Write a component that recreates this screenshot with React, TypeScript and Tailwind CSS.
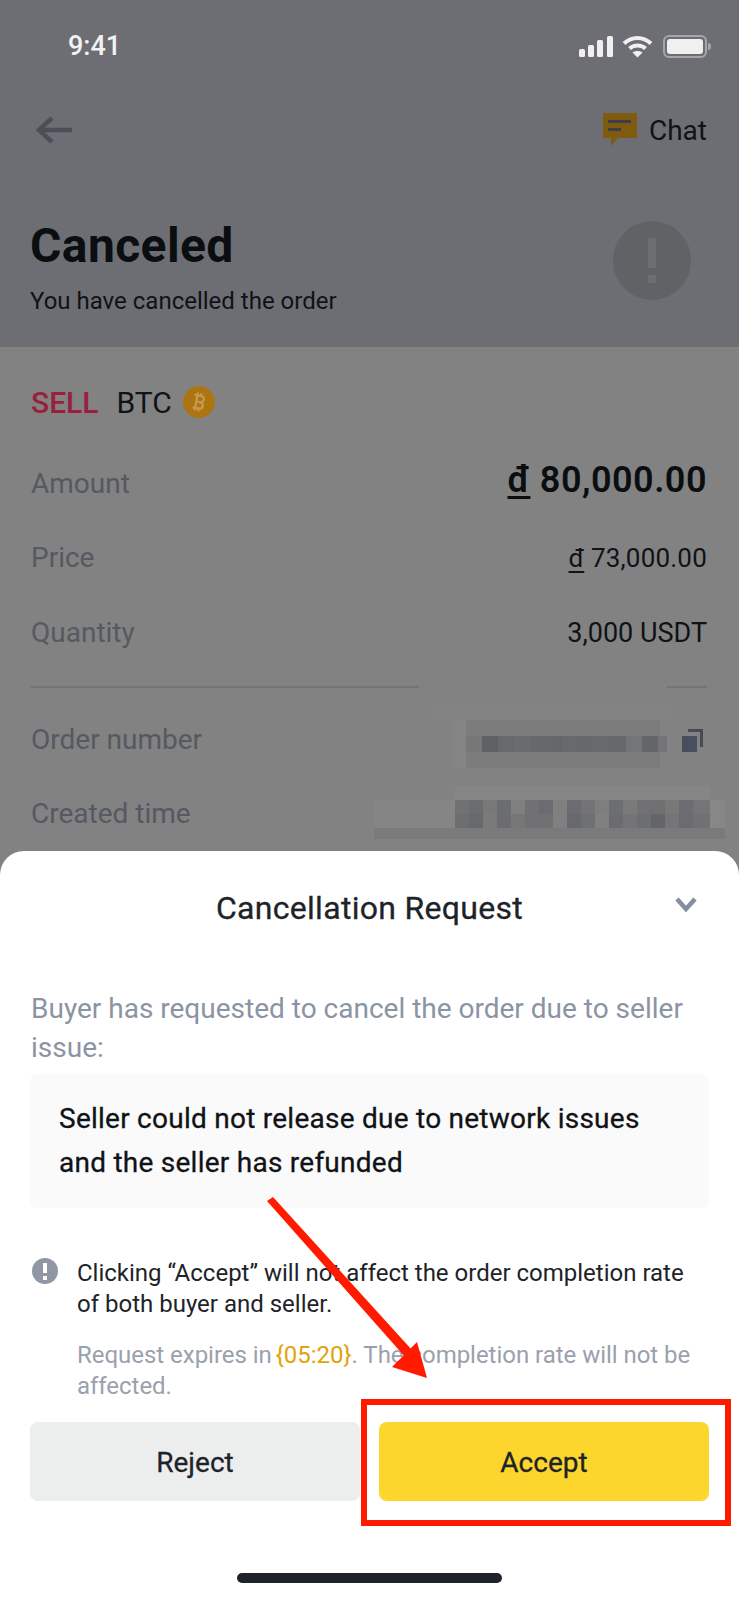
import React from "react";
import { Bitcoin } from "lucide-react";

const orderCells = [
  "bg-[#777778]", "bg-[#5f6064]", "bg-[#68696c]", "bg-[#6a6b6e]", "bg-[#67686b]", "bg-[#66676a]",
  "bg-[#68696c]", "bg-[#67686b]", "bg-[#68696c]", "bg-[#67686b]", "bg-[#747577]", "bg-[#646568]",
];
const timeTop = [
  "bg-[#717173]", "bg-[#6b6c6f]", "bg-[#787878]", "bg-[#6c6d70]", "bg-[#808080]", "bg-[#717173]",
  "bg-[#6b6c6f]", "bg-[#808080]", "bg-[#6b6c6f]", "bg-[#747476]", "bg-[#7e7e7e]", "bg-[#6d6e71]",
  "bg-[#7a7a7a]", "bg-[#717173]", "bg-[#707073]", "bg-[#787878]", "bg-[#6c6d70]", "bg-[#757577]",
];
const timeBottom = [
  "bg-[#6d6e70]", "bg-[#68696c]", "bg-[#7a7a7a]", "bg-[#6c6d70]", "bg-[#777778]", "bg-[#717173]",
  "bg-[#717173]", "bg-[#808080]", "bg-[#68696c]", "bg-[#6f7072]", "bg-[#808080]", "bg-[#6b6c6f]",
  "bg-[#747476]", "bg-[#6d6e71]", "bg-[#646568]", "bg-[#757577]", "bg-[#6b6c6f]", "bg-[#717173]",
];

function Row(props: { label: string; value?: React.ReactNode; className: string }) {
  return (
    <div className={"flex items-center justify-between " + props.className}>
      <span className="text-[28px] text-[#555961]">{props.label}</span>
      {props.value}
    </div>
  );
}

export default function App() {
  return (
    <div className="relative w-[739px] h-[1600px] overflow-hidden flex flex-col bg-white font-['Roboto',sans-serif] text-[#1e2329]">
      {/* dimmed top */}
      <div className="h-[347px] shrink-0 bg-[#6d6e73] flex flex-col">
        <div className="flex items-center justify-between h-[46px] mt-[23px] pl-[68px] pr-[28px]">
          <span className="text-[27px] font-medium text-[#f2f2f2]">9:41</span>
          <div className="flex items-center">
            <svg width="35" height="22" viewBox="0 0 35 22" fill="#f0f0f0">
              <rect x="0" y="14" width="6" height="8" rx="1.5" />
              <rect x="9" y="10" width="6" height="12" rx="1.5" />
              <rect x="18" y="5" width="6" height="17" rx="1.5" />
              <rect x="28" y="1" width="6" height="21" rx="1.5" />
            </svg>
            <svg width="31" height="23" viewBox="0 0 31 23" className="ml-[8px]" fill="none" stroke="#f0f0f0" strokeWidth="4">
              <path d="M2 8.5C10 1 21 1 29 8.5" />
              <path d="M7.5 13.5C12 9.5 19 9.5 23.5 13.5" />
              <path d="M15.5 22.5L10.5 17.5C13 15.5 18 15.5 20.5 17.5Z" fill="#f0f0f0" stroke="none" />
            </svg>
            <div className="ml-[10px] w-[44px] h-[23px] rounded-[6px] border-2 border-[#a5a6a9] p-[2px]">
              <div className="w-full h-full rounded-[3px] bg-[#f0f0f0]" />
            </div>
            <div className="ml-[1px] w-[3px] h-[7px] rounded-r-sm bg-[#a5a6a9]" />
          </div>
        </div>
        <div className="flex items-center justify-between mt-[44px] pl-[35px] pr-[32px]">
          <svg width="38" height="28" viewBox="0 0 38 28" fill="none" stroke="#4a4f57" strokeWidth="4.5">
            <path d="M37 14H4" />
            <path d="M17 2L4 14L17 26" />
          </svg>
          <div className="flex items-center">
            <svg width="34" height="34" viewBox="0 0 34 34">
              <path d="M0 0H34V25H15L8 33V25H0Z" fill="#7f5b10" />
              <rect x="5" y="7" width="23" height="3" fill="#3c3f47" />
              <rect x="5" y="15" width="13" height="3" fill="#3c3f47" />
            </svg>
            <span className="ml-[12px] mt-[1px] text-[28px] leading-none text-[#0f1216]">Chat</span>
          </div>
        </div>
        <div className="flex justify-between mt-[74px] pl-[30px] pr-[48px]">
          <div className="flex flex-col -mt-[2px]">
            <span className="text-[48px] leading-[54px] font-bold tracking-[0.4px] text-[#0b0e11]">Canceled</span>
            <span className="text-[24px] leading-[28px] mt-[14px] text-[#0f1216]">You have cancelled the order</span>
          </div>
          <div className="w-[78px] h-[79px] rounded-full bg-[#5f6366] flex flex-col items-center pt-[17px]">
            <div className="w-[8px] h-[30px] bg-[#6c6e72]" />
            <div className="w-[8px] h-[8px] mt-[7px] bg-[#6c6e72]" />
          </div>
        </div>
      </div>

      {/* dimmed details */}
      <div className="relative h-[540px] shrink-0 bg-[#828282] pl-[31px] pr-[32px]">
        <div className="flex items-center h-[32px] mt-[39px] text-[30px]">
          <span className="font-medium text-[#99203c]">SELL</span>
          <span className="ml-[18px] text-[#10131a]">BTC</span>
          <div className="ml-[11px] w-[32px] h-[32px] rounded-full bg-[#ac7512] flex items-center justify-center">
            <Bitcoin size={22} strokeWidth={2.5} color="#c6994c" />
          </div>
        </div>
        <Row
          label="Amount"
          className="mt-[43px] h-[46px]"
          value={
            <span className="mb-[8px] text-[36px] font-semibold text-[#0b0e11] tracking-[0.5px]">
              <span className="underline underline-offset-4 decoration-[3px]">đ</span> 80,000.00
            </span>
          }
        />
        <Row
          label="Price"
          className="mt-[31px] h-[40px]"
          value={
            <span className="text-[26px] text-[#0f1216] tracking-[0.2px]">
              <span className="underline underline-offset-4">đ</span> 73,000.00
            </span>
          }
        />
        <Row
          label="Quantity"
          className="mt-[35px] h-[40px]"
          value={<span className="text-[27px] text-[#0f1216]">3,000 USDT</span>}
        />
        <div className="mt-[33px] h-[2px] bg-[#747474]" />
        <Row
          label="Order number"
          className="mt-[32px] h-[40px]"
          value={
            <svg width="21" height="23" viewBox="0 0 21 23" className="mr-[4px]">
              <path d="M6 0H21V18H18V3H6Z" fill="#474b55" />
              <rect x="0" y="7" width="15" height="16" fill="#474f5f" />
            </svg>
          }
        />
        <Row label="Created time" className="mt-[34px] h-[40px]" />

        {/* blurred values */}
        <div className="absolute left-[419px] top-[338px] w-[248px] h-[8px] bg-[#828282]" />
        <div className="absolute left-[435px] top-[358px] w-[232px] h-[15px] bg-[#838383]" />
        <div className="absolute left-[451px] top-[373px] w-[15px] h-[48px] bg-[#848484]" />
        <div className="absolute left-[466px] top-[373px] w-[194px] h-[16px] bg-[#7c7c7c]" />
        <div className="absolute left-[466px] top-[389px] flex h-[16px]">
          {orderCells.map((c, i) => (
            <div key={i} className={"w-[16px] " + c} />
          ))}
          <div className="w-[9px] bg-[#747476]" />
        </div>
        <div className="absolute left-[466px] top-[405px] w-[194px] h-[16px] bg-[#7c7c7c]" />
        <div className="absolute left-[455px] top-[440px] w-[255px] h-[13px] bg-[#868686]" />
        <div className="absolute left-[374px] top-[453px] w-[81px] h-[28px] bg-[#858585]" />
        <div className="absolute left-[455px] top-[453px] flex h-[14px]">
          {timeTop.map((c, i) => (
            <div key={i} className={"w-[14px] " + c} />
          ))}
          <div className="w-[3px] bg-[#757577]" />
        </div>
        <div className="absolute left-[455px] top-[467px] flex h-[14px]">
          {timeBottom.map((c, i) => (
            <div key={i} className={"w-[14px] " + c} />
          ))}
          <div className="w-[3px] bg-[#717173]" />
        </div>
        <div className="absolute left-[710px] top-[453px] w-[15px] h-[28px] bg-[#878787]" />
        <div className="absolute left-[374px] top-[481px] w-[351px] h-[11px] bg-[#7a7a7a]" />
      </div>

      {/* sheet */}
      <div className="absolute left-0 right-0 top-[851px] bottom-0 rounded-t-[24px] bg-white flex flex-col">
        <div className="relative mt-[38px] h-[38px] flex items-center justify-center">
          <span className="text-[32px] tracking-[0.3px] text-[#1e2329] [-webkit-text-stroke:0.3px_#1e2329]">Cancellation Request</span>
          <svg width="22" height="15" viewBox="0 0 22 15" className="absolute left-[675px] top-[8px]" fill="none" stroke="#848e9c" strokeWidth="4.5">
            <path d="M2 2L11 12L20 2" />
          </svg>
        </div>
        <p className="mt-[62px] mx-[31px] text-[28px] leading-[39px] text-[#8b94a3]">
          Buyer has requested to cancel the order due to seller issue:
        </p>
        <div className="mt-[7px] mx-[30px] h-[134px] rounded-[8px] bg-[#fafafa] px-[29px] py-[23px] text-[28px] leading-[44px] tracking-[0.25px] text-[#0f1216] [-webkit-text-stroke:0.3px_#0f1216]">
          <p className="w-[600px]">Seller could not release due to network issues and the seller has refunded</p>
        </div>
        <div className="flex mt-[50px] pl-[32px] pr-[40px]">
          <svg width="26" height="26" viewBox="0 0 26 26" className="shrink-0">
            <circle cx="13" cy="13" r="13" fill="#8f97a5" />
            <rect x="11" y="5" width="4" height="10" fill="#fff" />
            <rect x="11" y="18" width="4" height="4" fill="#fff" />
          </svg>
          <div className="ml-[19px] text-[24px] leading-[31px]">
            <p className="text-[#1e2329]">Clicking “Accept” will not affect the order completion rate of both buyer and seller.</p>
            <p className="mt-[20px] text-[#9aa1ad] tracking-[-0.03px]">
              Request expires in
              <span className="ml-[4px] text-[#e0a408]">{"{05:20}"}</span>. The completion rate will not be affected.
            </p>
          </div>
        </div>
        <div className="flex justify-between mx-[30px] mt-[20px]">
          <div className="w-[330px] h-[79px] rounded-[8px] bg-[#eceded] flex items-center justify-center pt-[3px] text-[28px] [-webkit-text-stroke:0.3px_#1e2329]">Reject</div>
          <div className="w-[330px] h-[79px] rounded-[8px] bg-[#fcd62d] flex items-center justify-center pt-[3px] text-[28px] [-webkit-text-stroke:0.3px_#1e2329]">Accept</div>
        </div>
        <div className="mt-[72px] mx-auto w-[265px] h-[10px] rounded-full bg-[#1e2329]" />
      </div>

      {/* annotation */}
      <div className="absolute left-[361px] top-[1399px] w-[370px] h-[127px] border-[6px] border-[#ff1a00]" />
      <svg width="200" height="200" viewBox="0 0 200 200" className="absolute left-[260px] top-[1190px]">
        <path d="M7 11L13 7L152 160L146 168Z" fill="#ff1a00" />
        <path d="M157 152L132 177L167 188Z" fill="#ff1a00" />
      </svg>
    </div>
  );
}
